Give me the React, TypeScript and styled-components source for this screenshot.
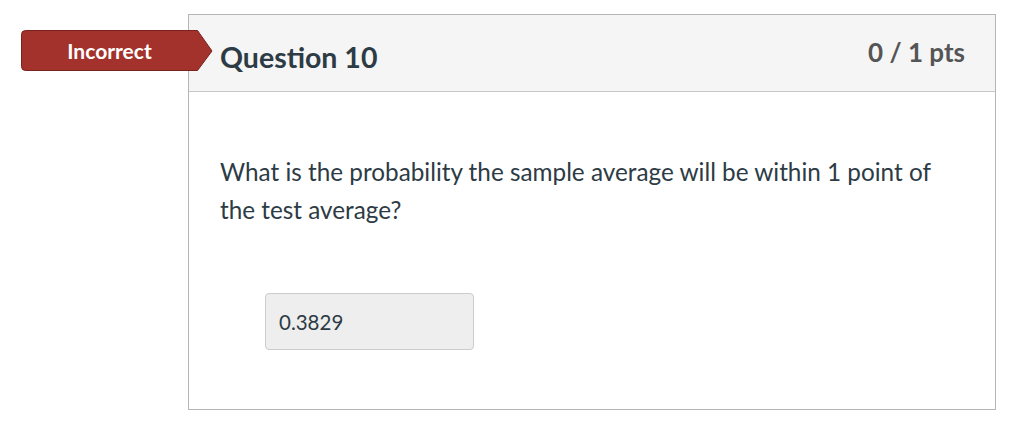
import React from 'react';
import styled, { createGlobalStyle } from 'styled-components';

const GlobalStyle = createGlobalStyle`
  body {
    margin: 0;
    background: #ffffff;
    font-family: Lato, "Open Sans", sans-serif;
  }
`;

const Page = styled.div`
  width: 1024px;
  height: 434px;
  padding: 14px 0 0 188px;
  box-sizing: border-box;
`;

const Card = styled.div`
  position: relative;
  width: 808px;
  height: 396px;
  box-sizing: border-box;
  border: 1px solid #b5b5b5;
`;

const Header = styled.div`
  display: flex;
  justify-content: space-between;
  align-items: flex-start;
  height: 77px;
  box-sizing: border-box;
  padding: 0 30px 0 31px;
  background-color: #f5f5f5;
  border-bottom: 1px solid #c7c7c7;
`;

const Title = styled.h2`
  margin: 25px 0 0;
  font-size: 28.5px;
  font-weight: 700;
  line-height: 34px;
  color: #2d3b45;
`;

const Points = styled.div`
  margin-top: 20px;
  font-size: 26px;
  font-weight: 700;
  line-height: 34px;
  color: #555555;
`;

const Body = styled.div`
  padding: 61px 56px 0 31px;
`;

const QuestionText = styled.p`
  margin: 0;
  font-size: 24.3px;
  line-height: 38px;
  color: #2d3b45;
`;

const Answer = styled.div`
  display: flex;
  align-items: center;
  margin: 64px 0 0 45px;
  width: 209px;
  height: 57px;
  box-sizing: border-box;
  padding: 0 13px;
  background-color: #eeeeee;
  border: 1px solid #cccccc;
  border-radius: 4px;
  font-size: 20.5px;
  color: #2d3b45;
`;

const Badge = styled.div`
  position: absolute;
  left: -168px;
  top: 15px;
  width: 192px;
  height: 41px;
  display: flex;
  align-items: center;
`;

const BadgeShape = styled.svg`
  position: absolute;
  inset: 0;
`;

const BadgeLabel = styled.span`
  position: relative;
  width: 177px;
  text-align: center;
  font-size: 21px;
  font-weight: 700;
  color: #ffffff;
`;

export default function App() {
  return (
    <>
      <GlobalStyle />
      <Page>
        <Card>
          <Badge>
            <BadgeShape width="192" height="41" viewBox="0 0 192 41">
              <path
                d="M4.5 0.5 H176.5 L191 21 L176.5 40.5 H4.5 Q0.5 40.5 0.5 36.5 V4.5 Q0.5 0.5 4.5 0.5 Z"
                fill="#a3322c"
                stroke="#7a221d"
                strokeWidth="1"
              />
            </BadgeShape>
            <BadgeLabel>Incorrect</BadgeLabel>
          </Badge>
          <Header>
            <Title>Question 10</Title>
            <Points>0 / 1 pts</Points>
          </Header>
          <Body>
            <QuestionText>
              What is the probability the sample average will be within 1 point of the test
              average?
            </QuestionText>
            <Answer>0.3829</Answer>
          </Body>
        </Card>
      </Page>
    </>
  );
}
